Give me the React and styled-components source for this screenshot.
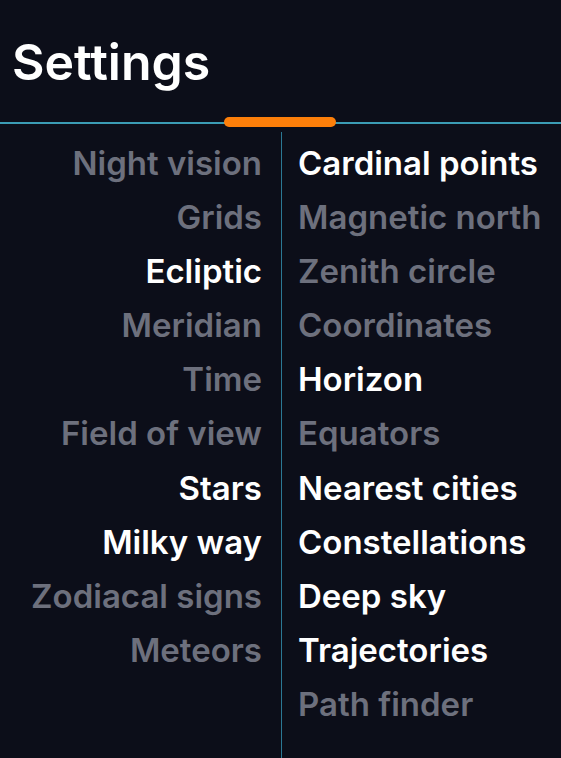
import React from "react";
import styled, { createGlobalStyle } from "styled-components";

const Global = createGlobalStyle`
  html, body {
    margin: 0;
    padding: 0;
    background: #0c0e19;
  }
  body {
    font-family: Inter, "Noto Sans", sans-serif;
    -webkit-font-smoothing: antialiased;
  }
`;

const Screen = styled.div`
  width: 561px;
  height: 758px;
  background: #0c0e19;
  overflow: hidden;
  display: flex;
  flex-direction: column;
`;

const Header = styled.header`
  height: 122px;
  padding: 32px 0 0 12px;
  box-sizing: border-box;
`;

const Title = styled.h1`
  margin: 0;
  font-size: 50px;
  line-height: 60px;
  font-weight: 600;
  color: #ffffff;
  letter-spacing: 0;
`;

const Rule = styled.div`
  position: relative;
  height: 2px;
  background: #3b9cb4;
`;

const Handle = styled.span`
  position: absolute;
  left: 224px;
  top: -5px;
  width: 112px;
  height: 10px;
  border-radius: 5px;
  background: #fd7f0a;
`;

const Columns = styled.div`
  flex: 1;
  display: grid;
  grid-template-columns: 281px 1px 1fr;
  padding-top: 8px;
`;

const Divider = styled.div`
  background: #2b7894;
`;

const List = styled.ul`
  list-style: none;
  margin: 0;
  padding: ${(p) => (p.$side === "left" ? "4px 19px 0 0" : "4px 0 0 16px")};
  display: flex;
  flex-direction: column;
  align-items: ${(p) => (p.$side === "left" ? "flex-end" : "flex-start")};
`;

const Item = styled.li`
  height: 54.1px;
  line-height: 54px;
  font-size: 33px;
  font-weight: 600;
  white-space: nowrap;
  color: ${(p) => (p.$on ? "#ffffff" : "#6d707d")};
`;

const left = [
  ["Night vision", false],
  ["Grids", false],
  ["Ecliptic", true],
  ["Meridian", false],
  ["Time", false],
  ["Field of view", false],
  ["Stars", true],
  ["Milky way", true],
  ["Zodiacal signs", false],
  ["Meteors", false],
];

const right = [
  ["Cardinal points", true],
  ["Magnetic north", false],
  ["Zenith circle", false],
  ["Coordinates", false],
  ["Horizon", true],
  ["Equators", false],
  ["Nearest cities", true],
  ["Constellations", true],
  ["Deep sky", true],
  ["Trajectories", true],
  ["Path finder", false],
];

export default function App() {
  return (
    <Screen>
      <Global />
      <Header>
        <Title>Settings</Title>
      </Header>
      <Rule>
        <Handle />
      </Rule>
      <Columns>
        <List $side="left">
          {left.map(([label, on]) => (
            <Item key={label} $on={on}>
              {label}
            </Item>
          ))}
        </List>
        <Divider />
        <List $side="right">
          {right.map(([label, on]) => (
            <Item key={label} $on={on}>
              {label}
            </Item>
          ))}
        </List>
      </Columns>
    </Screen>
  );
}
